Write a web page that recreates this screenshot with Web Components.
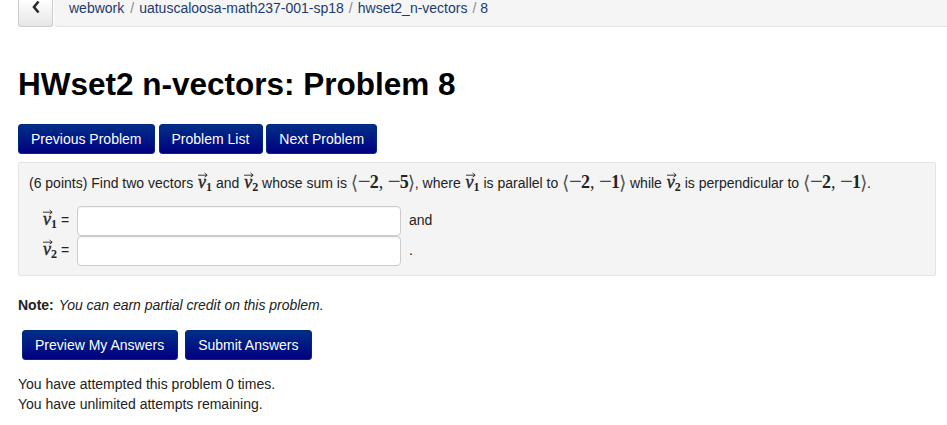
<!DOCTYPE html>
<html lang="en">
<head>
<meta charset="utf-8">
<title>HWset2 n-vectors: Problem 8</title>
<style>
  html, body { margin: 0; background: #fff; }
  body { font: 14px/20px "Liberation Sans", Arial, sans-serif; color: #333; }
</style>
</head>
<body>
<problem-page></problem-page>

<script>
class WwButton extends HTMLElement {
    connectedCallback() {
        this.attachShadow({ mode: 'open' });
        this.shadowRoot.innerHTML = `
            <style>
                :host { display: block; }
                button {
                    display: block;
                    height: 30px;
                    margin: 0;
                    padding: 0 calc(12px + var(--extra, 0px)) 0 12px;
                    font: 14px/20px "Liberation Sans", Arial, sans-serif;
                    color: #fff;
                    border: 1px solid #002a80;
                    border-radius: 3px;
                    background: linear-gradient(to bottom, #002f88, #00007f);
                    white-space: nowrap;
                }
            </style>
            <button type="button"><slot></slot></button>
        `;
    }
}

class WwCrumbs extends HTMLElement {
    connectedCallback() {
        this.attachShadow({ mode: 'open' });
        this.shadowRoot.innerHTML = `
            <style>
                :host { display: flex; height: 27px; padding-left: 18px; gap: 1px; }
                .back {
                    box-sizing: border-box;
                    width: 35px;
                    display: flex;
                    justify-content: center;
                    border: 1px solid #ccc;
                    border-top: 0;
                    border-radius: 0 0 3px 3px;
                    background: linear-gradient(to bottom, #fff, #e6e6e6);
                }
                .back svg { display: block; }
                .bar {
                    flex: 1;
                    box-sizing: border-box;
                    display: flex;
                    padding-left: 15px;
                    height: 27px;
                    line-height: 16px;
                    background: #f5f5f5;
                    border-bottom: 1px solid #e3e3e3;
                    border-radius: 0 0 0 4px;
                    color: #888;
                    white-space: pre;
                }
                .bar span { color: #1d3a6e; }
                .bar i { font-style: normal; padding: 0 5px 0 6px; }
                .bar i.tight { padding: 0 5px 0 5px; }
                .bar i.last { padding: 0 4px 0 5px; }
            </style>
            <div class="back">
                <svg width="10" height="16" viewBox="0 0 10 16"><path d="M7.5 1.5 3 7l4.5 5.5" fill="none" stroke="#2b2b2b" stroke-width="2.6"/></svg>
            </div>
            <div class="bar"><span>webwork</span><i>/</i><span>uatuscaloosa-math237-001-sp18</span><i class="tight">/</i><span>hwset2_n-vectors</span><i class="last">/</i><span>8</span></div>
        `;
    }
}

class VecV extends HTMLElement {
    connectedCallback() {
        this.attachShadow({ mode: 'open' });
        this.shadowRoot.innerHTML = `
            <style>
                :host {
                    display: inline-block;
                    position: relative;
                    box-sizing: border-box;
                    width: 15px;
                    padding-left: 1px;
                    font-family: "Liberation Serif", serif;
                    color: #222;
                    line-height: 1;
                    white-space: nowrap;
                }
                .v { font-style: italic; font-size: 18px; font-weight: 400; -webkit-text-stroke: .35px #222; }
                sub { font-size: 12px; font-weight: 700; vertical-align: -3px; line-height: 0; }
                svg { position: absolute; left: 1px; top: -1px; }
            </style>
            <span class="v">v</span><sub><slot></slot></sub>
            <svg width="10" height="6" viewBox="0 0 10 6"><path d="M0 3.2h9M6.6 1l2.6 2.2L6.6 5.2" fill="none" stroke="#222" stroke-width=".9"/></svg>
        `;
    }
}

class MathTuple extends HTMLElement {
    connectedCallback() {
        const nums = this.getAttribute('values').split(' ');
        const items = nums.map(n => `<span class="m">−</span><b>${n}</b>`).join('<span class="c">,</span>');
        this.attachShadow({ mode: 'open' });
        this.shadowRoot.innerHTML = `
            <style>
                :host {
                    display: inline-flex;
                    box-sizing: border-box;
                    width: 64px;
                    align-items: center;
                    font: 700 18px/20px "Liberation Serif", serif;
                    color: #222;
                    vertical-align: -1px;
                }
                span, b { flex: none; }
                .f { font: 400 19px/20px "DejaVu Sans", sans-serif; color: #555; width: 7px; }
                .f:last-child { width: 6px; margin-left: -1px; }
                .m { font-weight: 400; font-size: 23px; color: #444; width: 12px; }
                b { width: 9px; }
                .c { width: 9px; font-weight: 400; }
            </style>
            <span class="f">⟨</span>${items}<span class="f">⟩</span>
        `;
    }
}

class AnswerRow extends HTMLElement {
    connectedCallback() {
        this.attachShadow({ mode: 'open' });
        this.shadowRoot.innerHTML = `
            <style>
                :host { display: flex; align-items: center; height: 30px; }
                .label { width: 48px; box-sizing: border-box; padding-left: 13px; white-space: nowrap; margin-top: -2px; }
                input {
                    box-sizing: border-box;
                    width: 324px;
                    height: 30px;
                    margin: 0;
                    border: 1px solid #ccc;
                    border-radius: 4px;
                    background: #fff;
                    box-shadow: inset 0 1px 1px rgba(0,0,0,.05);
                }
                .after { margin-left: 8px; margin-top: -2px; }
            </style>
            <span class="label"><slot name="label"></slot> =</span>
            <input type="text">
            <span class="after"><slot name="after"></slot></span>
        `;
    }
}

class ProblemBox extends HTMLElement {
    connectedCallback() {
        this.attachShadow({ mode: 'open' });
        this.shadowRoot.innerHTML = `
            <style>
                :host {
                    display: block;
                    box-sizing: border-box;
                    width: 918px;
                    height: 114px;
                    margin-left: 18px;
                    padding: 9px 10px 9px;
                    background: #f4f4f4;
                    border: 1px solid #e3e3e3;
                    border-radius: 2px;
                }
                .statement { white-space: nowrap; height: 34px; }
                .rows { display: flex; flex-direction: column; }
            </style>
            <div class="statement">(6 points) Find two vectors <vec-v>1</vec-v> and <vec-v>2</vec-v> whose sum is <math-tuple values="2 5"></math-tuple>, where <vec-v>1</vec-v> is parallel to <math-tuple values="2 1"></math-tuple> while <vec-v>2</vec-v> is perpendicular to <math-tuple values="2 1"></math-tuple>.</div>
            <div class="rows">
                <answer-row><vec-v slot="label">1</vec-v><span slot="after">and</span></answer-row>
                <answer-row><vec-v slot="label">2</vec-v><span slot="after">.</span></answer-row>
            </div>
        `;
    }
}

class ProblemPage extends HTMLElement {
    connectedCallback() {
        this.attachShadow({ mode: 'open' });
        this.shadowRoot.innerHTML = `
            <style>
                :host { display: block; color: #222; }
                h1 {
                    margin: 38px 0 20px 18px;
                    font: 700 31.5px/39px "Liberation Sans", Arial, sans-serif;
                    color: #000;
                }
                .nav { display: flex; gap: 3px; margin: 0 0 8px 18px; }
                .nav .list { margin-left: 1px; --extra: 1px; }
                .note { margin: 19px 0 15px 18px; }
                .note i { margin-left: 1px; letter-spacing: -.03px; }
                .actions { display: flex; gap: 7px; margin: 0 0 14px 22px; }
                .actions .wide { --extra: 1px; }
                .attempts { margin-left: 18px; }
            </style>
            <ww-crumbs></ww-crumbs>
            <h1>HWset2 n-vectors: Problem 8</h1>
            <div class="nav">
                <ww-button>Previous Problem</ww-button>
                <ww-button class="list">Problem List</ww-button>
                <ww-button>Next Problem</ww-button>
            </div>
            <problem-box></problem-box>
            <div class="note"><b>Note:</b> <i>You can earn partial credit on this problem.</i></div>
            <div class="actions">
                <ww-button class="wide">Preview My Answers</ww-button>
                <ww-button>Submit Answers</ww-button>
            </div>
            <div class="attempts">You have attempted this problem 0 times.<br>You have unlimited attempts remaining.</div>
        `;
    }
}

customElements.define('ww-button', WwButton);
customElements.define('ww-crumbs', WwCrumbs);
customElements.define('vec-v', VecV);
customElements.define('math-tuple', MathTuple);
customElements.define('answer-row', AnswerRow);
customElements.define('problem-box', ProblemBox);
customElements.define('problem-page', ProblemPage);
</script>
</body>
</html>
